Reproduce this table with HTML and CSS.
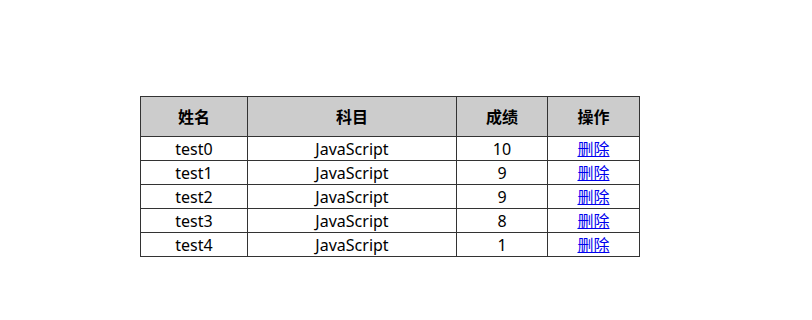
FILE: index.html
```html
<!DOCTYPE html>
<html lang="zh">
<head>
<meta charset="utf-8">
<link rel="stylesheet" href="styles.css">
</head>
<body>
<table class="score-table">
  <colgroup>
    <col class="c-name">
    <col class="c-subject">
    <col class="c-score">
    <col class="c-op">
  </colgroup>
  <thead>
    <tr><th>姓名</th><th>科目</th><th>成绩</th><th>操作</th></tr>
  </thead>
  <tbody>
    <tr><td>test0</td><td>JavaScript</td><td>10</td><td><a href="#">删除</a></td></tr>
    <tr><td>test1</td><td>JavaScript</td><td>9</td><td><a href="#">删除</a></td></tr>
    <tr><td>test2</td><td>JavaScript</td><td>9</td><td><a href="#">删除</a></td></tr>
    <tr><td>test3</td><td>JavaScript</td><td>8</td><td><a href="#">删除</a></td></tr>
    <tr><td>test4</td><td>JavaScript</td><td>1</td><td><a href="#">删除</a></td></tr>
  </tbody>
</table>
</body>
</html>
```
FILE: styles.css
```css
html, body {
  margin: 0;
  padding: 0;
  background: #fff;
}
body {
  padding: 96px 0 0 140px;
  font-family: "Noto Sans", "Noto Sans CJK SC", sans-serif;
  font-size: 16px;
  color: #000;
}
.score-table {
  border-collapse: collapse;
  table-layout: fixed;
  width: 499px;
}
.c-name { width: 107px; }
.c-subject { width: 209px; }
.c-score { width: 91px; }
.c-op { width: 92px; }
.score-table th,
.score-table td {
  border: 1px solid #333;
  padding: 0;
  text-align: center;
  vertical-align: middle;
}
.score-table th {
  background: #ccc;
  height: 39px;
  font-weight: bold;
  line-height: 20px;
}
.score-table td {
  height: 23px;
  line-height: 22px;
}
.score-table a {
  color: #00e;
  text-decoration: underline;
}
```
